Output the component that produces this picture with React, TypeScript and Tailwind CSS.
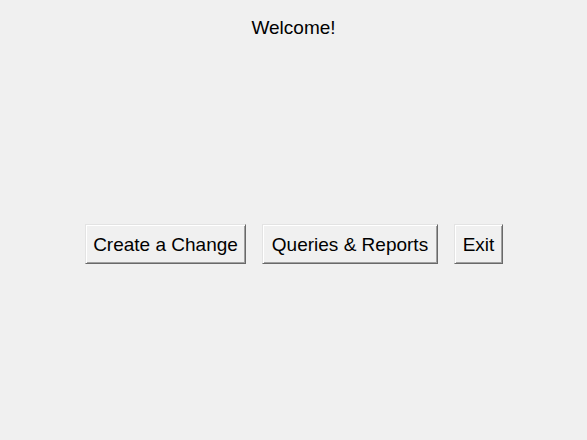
import React from "react";

const buttons = [
  { label: "Create a Change", width: "w-[161px]" },
  { label: "Queries & Reports", width: "w-[176px]" },
  { label: "Exit", width: "w-[49px]" },
];

function TkButton({ label, width }: { label: string; width: string }) {
  return (
    <button
      className={`${width} h-[40px] pt-[2px] bg-[#f0f0f0] border border-t-[#e3e3e3] border-l-[#e3e3e3] border-b-[#696969] border-r-[#696969] shadow-[inset_1px_1px_0_#ffffff,inset_-1px_-1px_0_#a0a0a0] text-[19px] leading-[22px] text-black flex items-center justify-center whitespace-nowrap`}
    >
      {label}
    </button>
  );
}

export default function App() {
  return (
    <div
      className="w-[587px] h-[440px] bg-[#f0f0f0] flex flex-col items-center overflow-hidden"
      style={{ fontFamily: '"Liberation Sans", Arial, sans-serif' }}
    >
      {/* Title label */}
      <div className="pt-[16px] text-[19px] leading-[24px] text-black">Welcome!</div>

      {/* Main actions */}
      <div className="mt-[184px] flex gap-4 pl-[1px]">
        {buttons.map((b) => (
          <TkButton key={b.label} label={b.label} width={b.width} />
        ))}
      </div>
    </div>
  );
}
